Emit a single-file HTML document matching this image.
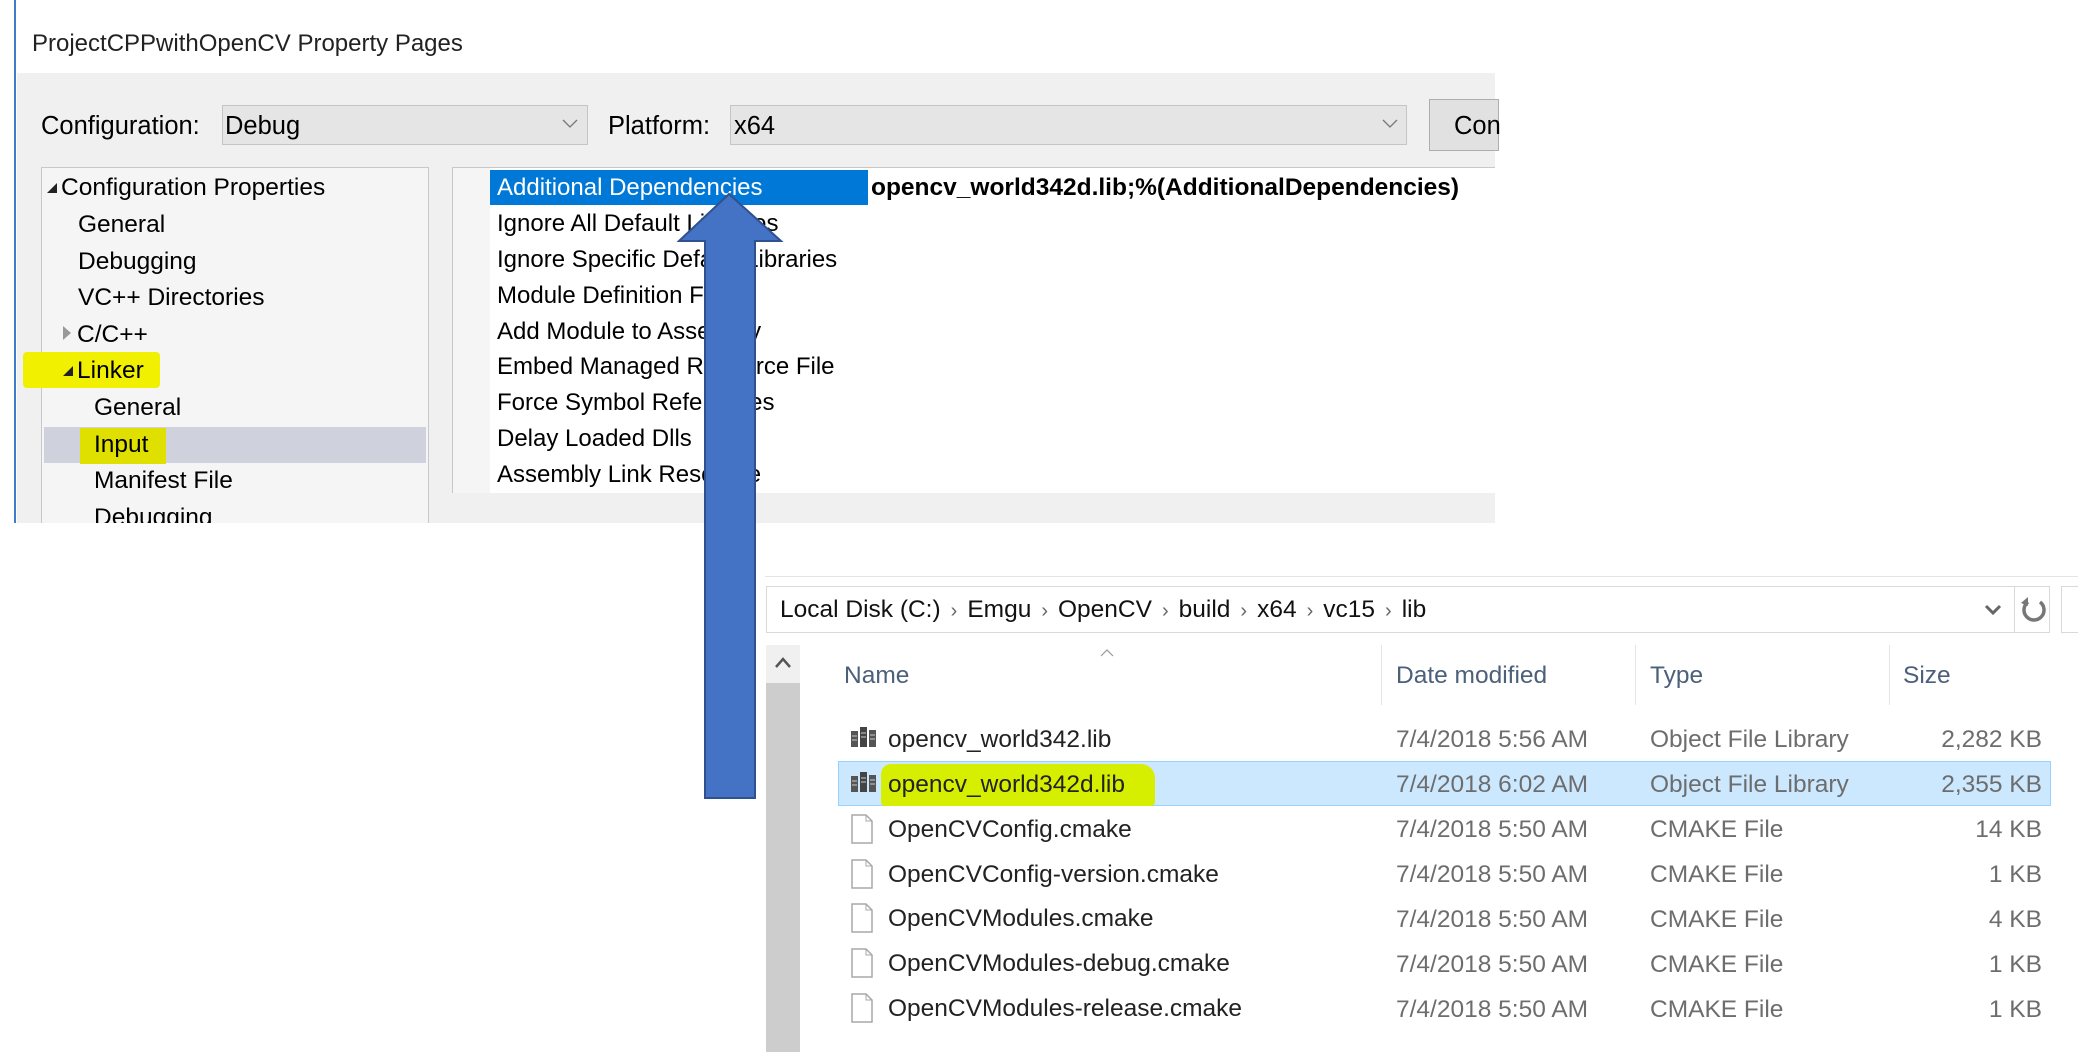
<!DOCTYPE html>
<html><head><meta charset="utf-8"><style>
*{margin:0;padding:0;box-sizing:border-box}
body{width:2078px;height:1052px;background:#fff;position:relative;overflow:hidden;font-family:"Liberation Sans",sans-serif;color:#000}
.a{position:absolute;white-space:nowrap}
.t{font-size:24.5px;line-height:36px}
.p{font-size:24px;line-height:36px}
.e{font-size:24.5px;line-height:45px;color:#222}
.g{color:#6d6d6d}
.c{display:inline-block;margin:0 10px;font-size:20px;color:#666}
.tri{display:inline-block;width:0;height:0;border-left:10px solid transparent;border-bottom:10px solid #222;margin-right:4px;vertical-align:2px}
.tro{display:inline-block;width:0;height:0;border-top:7px solid transparent;border-bottom:7px solid transparent;border-left:8px solid #999;margin-right:6px;vertical-align:2px}
</style></head><body>
<div class="a" style="left:14px;top:0;width:2px;height:523px;background:#3c7fc8"></div>
<div class="a" style="left:32px;top:30px;font-size:24px;color:#222">ProjectCPPwithOpenCV Property Pages</div>
<div class="a" style="left:17px;top:73px;width:1478px;height:450px;background:#f0f0f0"></div>
<div class="a" style="left:41px;top:112px;font-size:25.5px">Configuration:</div>
<div class="a" style="left:222px;top:105px;width:366px;height:40px;background:#e5e5e5;border:1px solid #c5c5c5"></div>
<div class="a" style="left:225px;top:112px;font-size:25.5px">Debug</div>
<svg class="a" style="left:562px;top:119px" width="16" height="10"><path d="M1 1 L8 8 L15 1" stroke="#777" stroke-width="1.3" fill="none"/></svg>
<div class="a" style="left:608px;top:112px;font-size:25.5px">Platform:</div>
<div class="a" style="left:730px;top:105px;width:677px;height:40px;background:#e5e5e5;border:1px solid #c5c5c5"></div>
<div class="a" style="left:734px;top:112px;font-size:25.5px">x64</div>
<svg class="a" style="left:1382px;top:119px" width="16" height="10"><path d="M1 1 L8 8 L15 1" stroke="#777" stroke-width="1.3" fill="none"/></svg>
<div class="a" style="left:1429px;top:99px;width:70px;height:52px;background:#e1e1e1;border:1px solid #adadad"></div>
<div class="a" style="left:1454px;top:112px;font-size:25.5px">Con</div>
<!-- tree -->
<div class="a" style="left:41px;top:167px;width:388px;height:356px;background:#f5f5f5;border:1px solid #c8c8c8;border-bottom:none"></div>
<div class="a" style="left:44px;top:427px;width:382px;height:36px;background:#cfd1dc"></div>
<div class="a" style="left:23px;top:352px;width:137px;height:36px;background:#f0f000;border-radius:4px"></div>
<div class="a" style="left:80px;top:428px;width:86px;height:36px;background:#e0e000"></div>
<div class="a t" style="left:47px;top:170px"><span class="tri"></span>Configuration Properties</div>
<div class="a t" style="left:78px;top:207px">General</div>
<div class="a t" style="left:78px;top:244px">Debugging</div>
<div class="a t" style="left:78px;top:280px">VC++ Directories</div>
<div class="a t" style="left:63px;top:317px"><span class="tro"></span>C/C++</div>
<div class="a t" style="left:63px;top:353px"><span class="tri"></span>Linker</div>
<div class="a t" style="left:94px;top:390px">General</div>
<div class="a t" style="left:94px;top:427px">Input</div>
<div class="a t" style="left:94px;top:463px">Manifest File</div>
<div class="a t" style="left:94px;top:500px;height:23px;overflow:hidden">Debugging</div>
<!-- grid -->
<div class="a" style="left:452px;top:167px;width:1043px;height:326px;background:#fff;border-top:1px solid #c8c8c8;border-left:1px solid #c8c8c8"></div>
<div class="a" style="left:453px;top:168px;width:37px;height:325px;background:#f5f5f5"></div>
<div class="a" style="left:490px;top:170px;width:378px;height:35px;background:#0078d7"></div>
<div class="a p" style="left:497px;top:170px;color:#fff">Additional Dependencies</div>
<div class="a p" style="left:871px;top:170px;font-weight:bold;font-size:24.5px">opencv_world342d.lib;%(AdditionalDependencies)</div>
<div class="a p" style="left:497px;top:206px">Ignore All Default Libraries</div>
<div class="a p" style="left:497px;top:242px">Ignore Specific Default Libraries</div>
<div class="a p" style="left:497px;top:278px">Module Definition File</div>
<div class="a p" style="left:497px;top:314px">Add Module to Assembly</div>
<div class="a p" style="left:497px;top:349px">Embed Managed Resource File</div>
<div class="a p" style="left:497px;top:385px">Force Symbol References</div>
<div class="a p" style="left:497px;top:421px">Delay Loaded Dlls</div>
<div class="a p" style="left:497px;top:457px">Assembly Link Resource</div>
<div class="a" style="left:868px;top:206px;width:627px;height:287px;background:#fff"></div>
<!-- explorer -->
<div class="a" style="left:765px;top:576px;width:1313px;height:476px;background:#fff;border-top:1px solid #e5e5e5"></div>
<div class="a" style="left:766px;top:586px;width:1284px;height:47px;border:1px solid #d9d9d9"></div>
<div class="a" style="left:2014px;top:586px;width:1px;height:47px;background:#d9d9d9"></div>
<div class="a" style="left:2061px;top:586px;width:30px;height:47px;border:1px solid #d9d9d9"></div>
<div class="a" style="left:780px;top:592px;font-size:24.5px;line-height:36px;color:#111">Local Disk (C:)<span class="c">&#x203A;</span>Emgu<span class="c">&#x203A;</span>OpenCV<span class="c">&#x203A;</span>build<span class="c">&#x203A;</span>x64<span class="c">&#x203A;</span>vc15<span class="c">&#x203A;</span>lib</div>
<svg class="a" style="left:1983px;top:603px" width="20" height="14"><path d="M3 3 L10 10 L17 3" stroke="#666" stroke-width="3" fill="none"/></svg>
<svg class="a" style="left:2019px;top:594px" width="30" height="32"><path d="M9 8 A10 10 0 1 0 21 8" stroke="#777" stroke-width="3.5" fill="none"/><path d="M9 3 L9 12 L2 9Z" fill="#777"/></svg>
<div class="a" style="left:766px;top:645px;width:34px;height:407px;background:#cdcdcd"></div>
<div class="a" style="left:766px;top:645px;width:34px;height:38px;background:#f0f0f0"></div>
<svg class="a" style="left:774px;top:656px" width="18" height="14"><path d="M2 11 L9 3 L16 11" stroke="#555" stroke-width="2.5" fill="none"/></svg>
<svg class="a" style="left:1100px;top:648px" width="14" height="9"><path d="M1 8 L7 2 L13 8" stroke="#999" stroke-width="1.2" fill="none"/></svg>
<div class="a e" style="left:844px;top:653px;color:#4c607a">Name</div>
<div class="a" style="left:1381px;top:645px;width:1px;height:60px;background:#e5e5e5"></div>
<div class="a e" style="left:1396px;top:653px;color:#4c607a">Date modified</div>
<div class="a" style="left:1635px;top:645px;width:1px;height:60px;background:#e5e5e5"></div>
<div class="a e" style="left:1650px;top:653px;color:#4c607a">Type</div>
<div class="a" style="left:1889px;top:645px;width:1px;height:60px;background:#e5e5e5"></div>
<div class="a e" style="left:1903px;top:653px;color:#4c607a">Size</div>
<div class="a" style="left:838px;top:761px;width:1213px;height:45px;background:#cce8ff;border:1px solid #99d1ff"></div>
<div class="a" style="left:881px;top:764px;width:274px;height:42px;background:#d6ef00;border-radius:10px 14px 4px 4px"></div>
<svg width="0" height="0" style="position:absolute"><defs>
<g id="lib"><rect x="0" y="4" width="7" height="16" fill="#555"/><rect x="9" y="0" width="7" height="20" fill="#444"/><rect x="18" y="3" width="7" height="17" fill="#555"/><path d="M1 9h5M1 13h5M10 6h5M10 10h5M19 8h5M19 12h5" stroke="#ccc" stroke-width="1"/></g>
<g id="doc"><path d="M1 1 H15 L21 7 V29 H1 Z" fill="#fff" stroke="#a8a8a8" stroke-width="1.5"/><path d="M15 1 V7 H21" fill="none" stroke="#a8a8a8"/></g>
</defs></svg>
<svg class="a" style="left:851px;top:727px" width="26" height="20"><use href="#lib"/></svg>
<svg class="a" style="left:851px;top:772px" width="26" height="20"><use href="#lib"/></svg>
<svg class="a" style="left:851px;top:814px" width="24" height="32"><use href="#doc"/></svg>
<svg class="a" style="left:851px;top:859px" width="24" height="32"><use href="#doc"/></svg>
<svg class="a" style="left:851px;top:903px" width="24" height="32"><use href="#doc"/></svg>
<svg class="a" style="left:851px;top:948px" width="24" height="32"><use href="#doc"/></svg>
<svg class="a" style="left:851px;top:993px" width="24" height="32"><use href="#doc"/></svg>
<div class="a e" style="left:888px;top:717px">opencv_world342.lib</div>
<div class="a e" style="left:888px;top:762px">opencv_world342d.lib</div>
<div class="a e" style="left:888px;top:807px">OpenCVConfig.cmake</div>
<div class="a e" style="left:888px;top:852px">OpenCVConfig-version.cmake</div>
<div class="a e" style="left:888px;top:896px">OpenCVModules.cmake</div>
<div class="a e" style="left:888px;top:941px">OpenCVModules-debug.cmake</div>
<div class="a e" style="left:888px;top:986px">OpenCVModules-release.cmake</div>
<div class="a e g" style="left:1396px;top:717px">7/4/2018 5:56 AM<br>7/4/2018 6:02 AM<br>7/4/2018 5:50 AM<br>7/4/2018 5:50 AM<br>7/4/2018 5:50 AM<br>7/4/2018 5:50 AM<br>7/4/2018 5:50 AM</div>
<div class="a e g" style="left:1650px;top:717px">Object File Library<br>Object File Library<br>CMAKE File<br>CMAKE File<br>CMAKE File<br>CMAKE File<br>CMAKE File</div>
<div class="a e g" style="right:36px;top:717px;text-align:right">2,282 KB<br>2,355 KB<br>14 KB<br>1 KB<br>4 KB<br>1 KB<br>1 KB</div>
<!-- arrow -->
<svg class="a" style="left:0;top:0" width="2078" height="1052"><path d="M729 194 L781 241 L755 241 L755 798 L705 798 L705 241 L679 241 Z" fill="#4472c4" stroke="#2f528f" stroke-width="2"/></svg>
</body></html>
